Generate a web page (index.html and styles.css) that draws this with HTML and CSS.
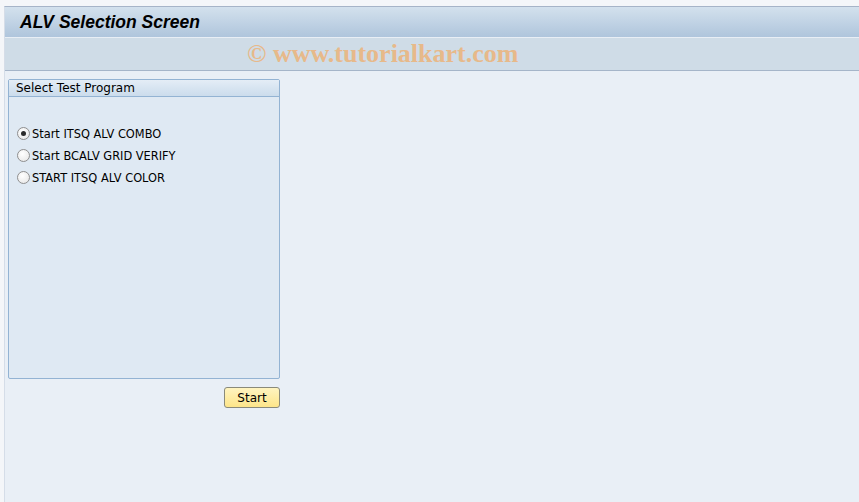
FILE: index.html
```html
<!DOCTYPE html>
<html>

<head>
    <meta charset="UTF-8">
    <title>ALV Selection Screen</title>
    <link rel="stylesheet" href="styles.css">
</head>

<body>
    <div id="frame">
        <div id="title-bar">
            <h1>ALV Selection Screen</h1>
        </div>
        <div id="toolbar">
            <span class="watermark">© www.tutorialkart.com</span>
        </div>
        <div id="content">
            <div class="group">
                <div class="group-title">Select Test Program</div>
                <div class="group-body">
                    <label class="radio-row">
                        <input type="radio" name="prog" checked>
                        <span>Start ITSQ ALV COMBO</span>
                    </label>
                    <label class="radio-row">
                        <input type="radio" name="prog">
                        <span>Start BCALV GRID VERIFY</span>
                    </label>
                    <label class="radio-row">
                        <input type="radio" name="prog">
                        <span>START ITSQ ALV COLOR</span>
                    </label>
                </div>
            </div>
            <div class="actions">
                <button class="start-button">Start</button>
            </div>
        </div>
    </div>
</body>

</html>
```

FILE: styles.css
```css
body {
    margin: 0;
    background: #f4f6f9;
    font-family: "DejaVu Sans", sans-serif;
    font-size: 11.4px;
    color: #000;
}

#frame {
    margin-top: 6px;
    margin-left: 4px;
    height: 496px;
    border-top: 1px solid #a6b4c8;
    border-left: 1px solid #d5dde8;
    background: #e9eff6;
    display: flex;
    flex-direction: column;
}

#title-bar {
    height: 30px;
    background: linear-gradient(#d3e1ed, #afc5dc);
    border-bottom: 1px solid #e8eef5;
    display: flex;
    align-items: center;
    padding-left: 15px;
}

h1 {
    margin: 0;
    font-family: "Liberation Sans", sans-serif;
    font-size: 17.5px;
    font-weight: bold;
    font-style: italic;
}

#toolbar {
    height: 32px;
    background: #cfdce7;
    border-bottom: 1px solid #a5b5c9;
    display: flex;
    align-items: center;
    padding-left: 242px;
}

.watermark {
    font-family: "Liberation Serif", serif;
    font-weight: bold;
    font-size: 26px;
    color: #e7b98a;
}

#content {
    padding: 8px 0 0 3px;
    width: 272px;
}

.group {
    height: 298px;
    border: 1px solid #93b3d3;
    border-radius: 2px;
    background: #dfe9f3;
    display: flex;
    flex-direction: column;
}

.group-title {
    height: 16px;
    line-height: 16px;
    padding-left: 7px;
    font-size: 12px;
    background: linear-gradient(#e4edf6, #cbdcec);
    border-bottom: 1px solid #93b3d3;
}

.group-body {
    padding: 28px 0 0 8px;
    display: flex;
    flex-direction: column;
    gap: 5px;
}

.radio-row {
    display: flex;
    align-items: center;
    height: 17px;
}

.radio-row input {
    appearance: none;
    margin: 0 2px 0 0;
    width: 13px;
    height: 13px;
    border: 1px solid #8f8f8f;
    border-radius: 50%;
    background: radial-gradient(circle at 40% 35%, #ffffff, #e4e4e4);
    display: flex;
    align-items: center;
    justify-content: center;
}

.radio-row input:checked::after {
    content: "";
    width: 5px;
    height: 5px;
    border-radius: 50%;
    background: #2b2b2b;
}

.actions {
    display: flex;
    justify-content: flex-end;
    padding-top: 8px;
}

.start-button {
    width: 56px;
    height: 21px;
    font-family: "DejaVu Sans", sans-serif;
    font-size: 12px;
    border: 1px solid #8a8a7a;
    border-radius: 3px;
    background: linear-gradient(#fff4c0, #fde58a);
    padding: 0;
}
```
